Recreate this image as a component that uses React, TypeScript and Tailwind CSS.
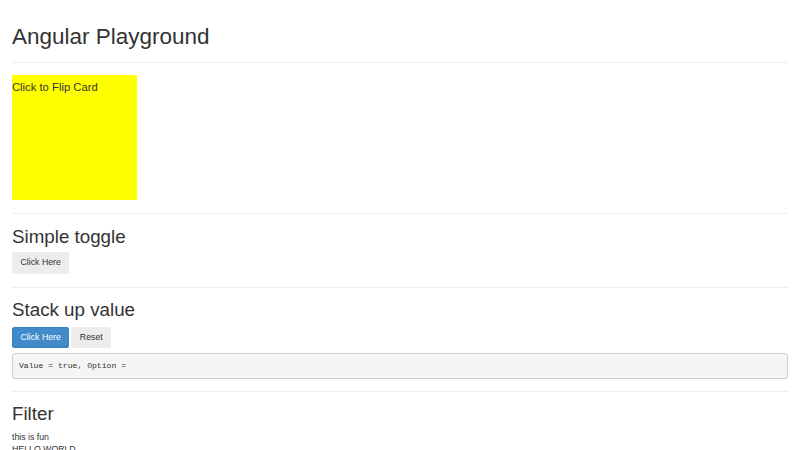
import React from "react";

export default function App() {
  const font = { fontFamily: '"Liberation Sans", Arial, sans-serif' };
  return (
    <div className="w-[800px] h-[450px] overflow-hidden bg-white text-[#333]" style={font}>
      <div className="px-[12px] pt-[24px]">
        <h1 className="text-[22.5px] leading-[26px] h-[26px] font-normal">Angular Playground</h1>
        <div className="mt-[12px] border-t border-[#eeeeee]" />
        <div className="mt-[12px] w-[125px] h-[125px] bg-[#ffff00] text-[11.25px] leading-[24px] cursor-pointer">
          Click to Flip Card
        </div>
        <div className="mt-[13px] border-t border-[#eeeeee]" />
        <h2 className="mt-[12px] text-[18.75px] leading-[22px] h-[22px] font-normal">Simple toggle</h2>
        <div className="mt-[4px] flex">
          <button className="h-[22px] px-[7.5px] text-[8.75px] bg-[#ececec] border border-[#ececec] rounded-[2px] text-[#333]">
            Click Here
          </button>
        </div>
        <div className="mt-[13px] border-t border-[#eeeeee]" />
        <h2 className="mt-[11px] text-[18.75px] leading-[22px] h-[22px] font-normal">Stack up value</h2>
        <div className="mt-[6px] flex gap-[2px]">
          <button className="h-[21px] px-[7.5px] text-[8.75px] bg-[#428bca] border border-[#3a80bd] rounded-[2px] text-white">
            Click Here
          </button>
          <button className="h-[21px] px-[7.5px] text-[8.75px] bg-[#ececec] border border-[#ececec] rounded-[2px] text-[#333]">
            Reset
          </button>
        </div>
        <pre
          className="mt-[5px] h-[26px] px-[6px] leading-[24px] text-[8.125px] bg-[#f5f5f5] border border-[#cccccc] rounded-[3px] text-[#333]"
          style={{ fontFamily: '"Liberation Mono", "Courier New", monospace' }}
        >
          Value = true, Option =
        </pre>
        <div className="mt-[12px] border-t border-[#eeeeee]" />
        <h2 className="mt-[11px] text-[18.75px] leading-[22px] h-[22px] font-normal">Filter</h2>
        <div className="mt-[6px] text-[8.75px] leading-[12px]">
          <div>this is fun</div>
          <div>HELLO WORLD</div>
        </div>
      </div>
    </div>
  );
}
